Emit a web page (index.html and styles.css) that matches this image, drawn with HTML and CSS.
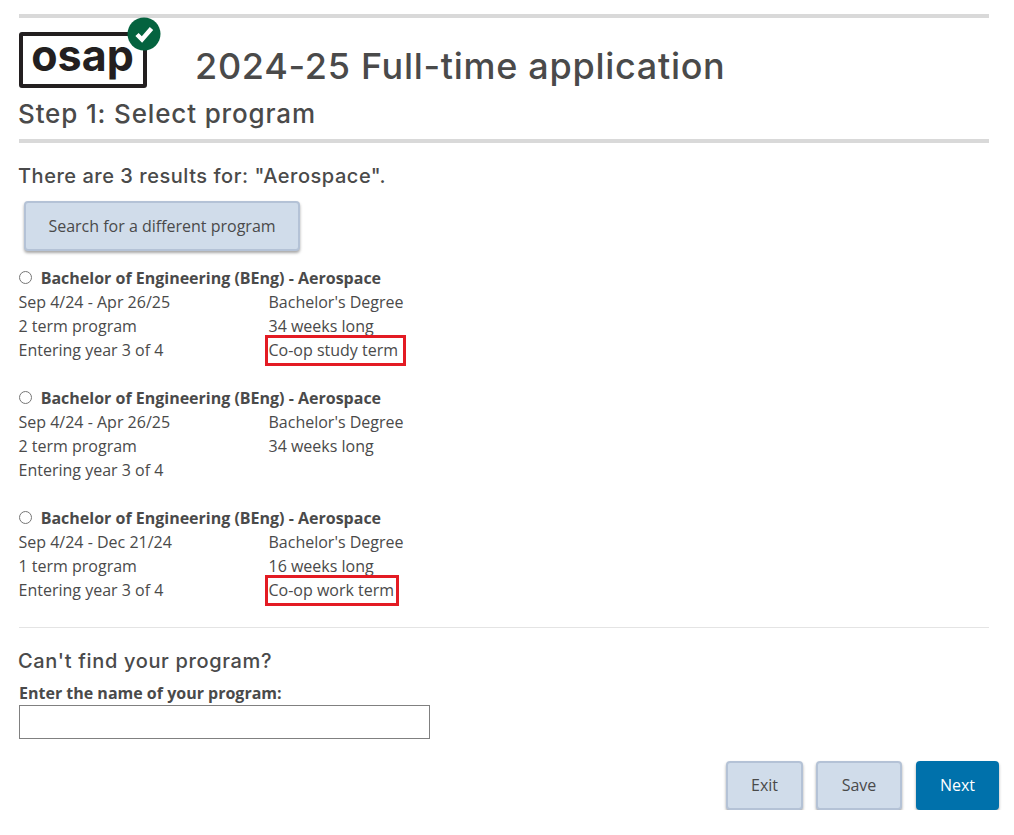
FILE: index.html
```html
<!DOCTYPE html>
<html lang="en">

<head>
    <meta charset="UTF-8">
    <title>2024-25 Full-time application</title>
    <link rel="stylesheet" href="styles.css">
</head>

<body>
    <header class="banner">
        <div class="titel">
            <div class="logo">
                <span class="logo-tekst">osap</span>
                <svg class="logo-flueben" width="34" height="34" viewBox="0 0 34 34">
                    <circle cx="17" cy="17" r="16.5" fill="#04633f" />
                    <path d="M10 17.5l5 5 9.5-11" fill="none" stroke="#fff" stroke-width="4.5" />
                </svg>
            </div>
            <h1>2024-25 Full-time application</h1>
        </div>
        <h2>Step 1: Select program</h2>
    </header>

    <section class="resultater">
        <h3>There are 3 results for: "Aerospace".</h3>
        <button class="knap soeg">Search for a different program</button>

        <article class="program">
            <label class="navn"><input type="radio" name="program"> Bachelor of Engineering (BEng) - Aerospace</label>
            <div class="info">
                <p>Sep 4/24 - Apr 26/25</p>
                <p>Bachelor's Degree</p>
                <p>2 term program</p>
                <p>34 weeks long</p>
                <p>Entering year 3 of 4</p>
                <p><span class="markeret studie">Co-op study term</span></p>
            </div>
        </article>

        <article class="program">
            <label class="navn"><input type="radio" name="program"> Bachelor of Engineering (BEng) - Aerospace</label>
            <div class="info">
                <p>Sep 4/24 - Apr 26/25</p>
                <p>Bachelor's Degree</p>
                <p>2 term program</p>
                <p>34 weeks long</p>
                <p>Entering year 3 of 4</p>
                <p></p>
            </div>
        </article>

        <article class="program">
            <label class="navn"><input type="radio" name="program"> Bachelor of Engineering (BEng) - Aerospace</label>
            <div class="info">
                <p>Sep 4/24 - Dec 21/24</p>
                <p>Bachelor's Degree</p>
                <p>1 term program</p>
                <p>16 weeks long</p>
                <p>Entering year 3 of 4</p>
                <p><span class="markeret">Co-op work term</span></p>
            </div>
        </article>
    </section>

    <section class="find">
        <h3>Can't find your program?</h3>
        <label for="programnavn">Enter the name of your program:</label>
        <input type="text" id="programnavn">
    </section>

    <footer class="knapper">
        <button class="knap exit">Exit</button>
        <button class="knap save">Save</button>
        <button class="knap next">Next</button>
    </footer>
</body>

</html>
```

FILE: styles.css
```css
* {
    box-sizing: border-box;
}

body {
    margin: 0;
    padding: 14px 25px 0 19px;
    font-family: "Open Sans", sans-serif;
    font-size: 16px;
    line-height: 24px;
    color: #4a4a4a;
    background-color: #fff;
}

h1,
h2,
h3 {
    margin: 0;
    font-family: "Inter", sans-serif;
    font-weight: 500;
    color: #4a4a4a;
}

.banner {
    border-top: 4px solid #d9d9d9;
    border-bottom: 4px solid #d9d9d9;
    height: 129px;
}

.titel {
    display: flex;
    align-items: flex-end;
    padding-top: 14px;
    height: 70px;
}

.logo {
    position: relative;
    width: 128px;
    height: 56px;
    border: 4px solid #231f20;
    border-radius: 3px;
    text-align: center;
}

.logo-tekst {
    display: block;
    font-family: "Inter", sans-serif;
    font-weight: 700;
    font-size: 43px;
    line-height: 39px;
    color: #231f20;
    padding-right: 1px;
}

.logo-flueben {
    position: absolute;
    top: -19px;
    right: -18px;
}

h1 {
    margin-left: 48px;
    font-size: 36px;
    line-height: 44px;
    letter-spacing: 0.7px;
}

.banner h2 {
    font-size: 26px;
    line-height: 32px;
    letter-spacing: 0.85px;
    margin: 10px 0 0 -1px;
}

.resultater h3 {
    font-size: 20px;
    line-height: 26px;
    letter-spacing: 0.53px;
    margin: 20px 0 0 -1px;
}

.knap {
    font-family: "Open Sans", sans-serif;
    font-size: 16px;
    color: #4a4a4a;
    background-color: #d0dcea;
    border: 2px solid #b4c2d6;
    border-radius: 4px;
    box-shadow: 0 2px 3px rgba(0, 0, 0, .35);
    cursor: pointer;
}

.soeg {
    display: block;
    width: 276px;
    height: 50px;
    margin: 12px 0 15px 5px;
}

.program {
    height: 120px;
}

.navn {
    display: block;
    font-weight: 700;
}

.navn input {
    width: 13px;
    height: 13px;
    margin: 0 4.5px 0 0;
}

.info {
    display: grid;
    grid-template-columns: 250px 1fr;
    margin-left: -0.5px;
}

.info p {
    margin: 0;
    height: 24px;
}

.markeret {
    display: inline-block;
    height: 31px;
    padding: 0 2px 0 1px;
    margin: -3px 0 0 -4px;
    border: 3px solid #e31b23;
    vertical-align: top;
}

.studie {
    padding-right: 5px;
}

.find {
    border-top: 1px solid #e4e4e4;
    margin-top: 1px;
}

.find h3 {
    font-size: 20px;
    line-height: 26px;
    letter-spacing: 0.65px;
    margin: 20px 0 0 -1px;
}

.find label {
    display: block;
    font-weight: 700;
    margin-top: 7px;
}

.find input {
    display: block;
    width: 411px;
    height: 34px;
    border: 1px solid #808080;
    background-color: #fff;
}

.knapper {
    display: flex;
    justify-content: flex-end;
    gap: 13px;
    margin: 22px -10px 0 0;
}

.knapper .knap {
    height: 49px;
    padding-bottom: 3px;
}

.exit {
    width: 77px;
}

.save {
    width: 86px;
}

.knapper .next {
    width: 83px;
    margin-left: 1px;
    font-weight: 500;
    color: #fff;
    background-color: #0071ab;
    border-color: #0071ab;
}
```
